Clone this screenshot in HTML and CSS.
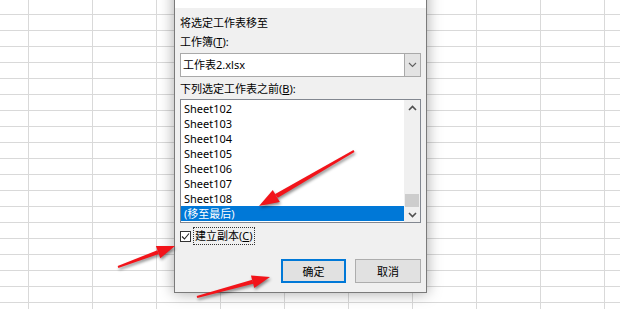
FILE: index.html
```html
<!DOCTYPE html>
<html lang="zh-CN">
  <head>
    <meta charset="UTF-8" />
    <title>移动或复制工作表</title>
    <link rel="stylesheet" href="styles.css">
  </head>
  <body>
    <div class="sheet">
      <div class="dialog">
        <div class="titlebar"></div>
        <div class="dialog-body">
          <div class="label first">将选定工作表移至</div>
          <div class="label">工作簿(<u>T</u>):</div>
          <div class="combo">
            <span class="combo-text">工作表2.xlsx</span>
            <span class="combo-btn">
              <svg width="9" height="6" viewBox="0 0 9 6"><polyline points="1,1 4.5,4.5 8,1" fill="none" stroke="#606060" stroke-width="1.1" /></svg>
            </span>
          </div>
          <div class="label gap">下列选定工作表之前(<u>B</u>):</div>
          <div class="listbox">
            <ul class="items">
              <li>Sheet102</li>
              <li>Sheet103</li>
              <li>Sheet104</li>
              <li>Sheet105</li>
              <li>Sheet106</li>
              <li>Sheet107</li>
              <li>Sheet108</li>
              <li class="selected">(移至最后)</li>
            </ul>
            <div class="scrollbar">
              <span class="sb-arrow">
                <svg width="9" height="6" viewBox="0 0 9 6"><polyline points="1,5 4.5,1.5 8,5" fill="none" stroke="#505050" stroke-width="1.6" /></svg>
              </span>
              <span class="sb-track"><span class="sb-thumb"></span></span>
              <span class="sb-arrow">
                <svg width="9" height="6" viewBox="0 0 9 6"><polyline points="1,1 4.5,4.5 8,1" fill="none" stroke="#505050" stroke-width="1.6" /></svg>
              </span>
            </div>
          </div>
          <div class="check-row">
            <span class="checkbox">
              <svg width="9" height="9" viewBox="0 0 9 9"><polyline points="1,4.5 3.5,7 8,1.5" fill="none" stroke="#222" stroke-width="1.1" /></svg>
            </span>
            <span class="check-text">建立副本(<u>C</u>)</span>
          </div>
          <div class="buttons">
            <button class="btn default">确定</button>
            <button class="btn">取消</button>
          </div>
        </div>
      </div>

      <!-- annotation arrows -->
      <svg class="arrows" width="620" height="309" viewBox="0 0 620 309">
        <g fill="#f2141a">
          <polygon points="354.5,151.9 353.5,150.1 274.8,194.3 277.8,197.7" />
          <polygon points="259,206 279.8,202.1 272.8,189.9" />
          <polygon points="117.7,266.1 118.3,267.9 158.8,254.1 157.4,250.3" />
          <polygon points="175,246 160.3,258.3 155.9,246.1" />
          <polygon points="196.7,296.1 197.3,297.9 253.3,283.8 252.3,279.8" />
          <polygon points="270,277 254.3,288 250.9,275.5" />
        </g>
      </svg>
    </div>
  </body>
</html>
```

FILE: styles.css
```css
* {
  box-sizing: border-box;
  margin: 0;
  padding: 0;
}
body {
  font-family: "Noto Sans", "Noto Sans CJK SC", sans-serif;
  font-size: 11px;
  color: #000;
  overflow: hidden;
}
.sheet {
  position: relative;
  width: 620px;
  height: 309px;
  background-color: #fff;
  background-image: linear-gradient(to right, #d9d9d9 1px, transparent 1px),
    linear-gradient(to bottom, #d9d9d9 1px, transparent 1px);
  background-size: 64px 100%, 100% 16px;
  background-position: 28px 0, 0 14px;
}
.dialog {
  position: absolute;
  left: 174px;
  top: -30px;
  width: 253px;
  border: 1px solid #7a7a7a;
  background: #f0f0f0;
  box-shadow: 0 0 14px rgba(0, 0, 0, 0.35);
}
.titlebar {
  height: 37px;
  background: #fff;
}
.dialog-body {
  padding: 6px 5px 9px 5px;
}
.label {
  height: 18px;
  line-height: 18px;
  white-space: nowrap;
}
.label.first {
  margin-bottom: 1px;
}
.label.gap {
  margin-top: 3px;
}
.label u,
.check-text u {
  text-decoration: underline;
  text-underline-offset: 1px;
}
.combo {
  margin-top: 2px;
  height: 24px;
  display: flex;
  border: 1px solid #a9a9a9;
  background: #fff;
}
.combo-text {
  flex: 1;
  padding-left: 2px;
  line-height: 22px;
}
.combo-btn {
  width: 16px;
  display: flex;
  align-items: center;
  justify-content: center;
  background: #e3e3e3;
  border-left: 1px solid #a9a9a9;
}
.listbox {
  margin-top: 1px;
  height: 124px;
  display: flex;
  border: 1px solid #828790;
  background: #fff;
}
.items {
  flex: 1;
  list-style: none;
  padding-top: 1px;
}
.items li {
  height: 15px;
  line-height: 15px;
  padding-left: 3px;
  white-space: nowrap;
}
.items li.selected {
  background: #0078d7;
  color: #fff;
}
.scrollbar {
  width: 16px;
  display: flex;
  flex-direction: column;
  background: #f0f0f0;
}
.sb-arrow {
  height: 15px;
  display: flex;
  align-items: center;
  justify-content: center;
}
.sb-track {
  flex: 1;
  display: flex;
  flex-direction: column;
  justify-content: flex-end;
  padding: 0 1px;
}
.sb-thumb {
  height: 13px;
  background: #cdcdcd;
}
.check-row {
  margin-top: 4px;
  height: 18px;
  display: flex;
  align-items: center;
}
.checkbox {
  width: 11px;
  height: 11px;
  border: 1px solid #333;
  background: #fff;
  display: flex;
  align-items: center;
  justify-content: center;
}
.check-text {
  margin-left: 2px;
  height: 18px;
  line-height: 16px;
  padding: 0 1px;
  border: 1px dotted #333;
}
.buttons {
  margin-top: 14px;
  display: flex;
  justify-content: flex-end;
  gap: 9px;
}
.btn {
  height: 24px;
  width: 66px;
  font-family: inherit;
  font-size: 11px;
  color: #000;
  background: #e1e1e1;
  border: 1px solid #adadad;
}
.btn.default {
  width: 65px;
  border-color: #0078d7;
  box-shadow: inset 0 0 0 1px #0078d7;
}
.arrows {
  position: absolute;
  left: 0;
  top: 0;
  filter: drop-shadow(1px 2px 1.5px rgba(0, 0, 0, 0.45));
}
```
